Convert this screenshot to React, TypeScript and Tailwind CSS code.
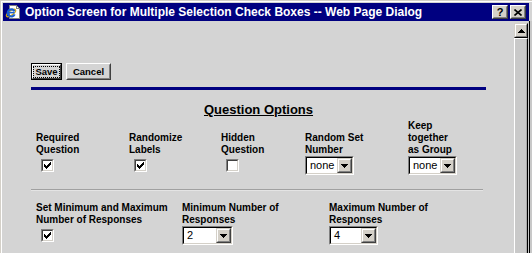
import type { ReactNode } from "react";

const face = "bg-[#d4d4d4]";

function TitleIcon() {
  return (
    <svg width="16" height="16" viewBox="0 0 16 16" shapeRendering="crispEdges">
      <path d="M4.5 1.5h7l3 3v10h-10z" fill="#fff" stroke="#808080" />
      <path d="M11.5 1.5v3h3" fill="none" stroke="#808080" />
      <g shapeRendering="auto">
        <ellipse cx="6" cy="9" rx="5.5" ry="2.2" transform="rotate(-35 6 9)" fill="none" stroke="#e0b000" strokeWidth="1.2" />
        <path d="M9.6 10.4a3.6 3.6 0 1 1 0-3" fill="none" stroke="#1a5fd0" strokeWidth="2.2" />
        <path d="M3.2 8.6h6.4" stroke="#1a5fd0" strokeWidth="1.6" />
      </g>
    </svg>
  );
}

function CaptionButton({ children }: { children: ReactNode }) {
  return (
    <div className="h-[14px] w-[16px] border border-b-[#404040] border-l-white border-r-[#404040] border-t-white bg-[#d4d0c8]">
      <div className="flex h-full w-full items-center justify-center border border-b-[#808080] border-l-[#d4d0c8] border-r-[#808080] border-t-[#d4d0c8]">
        {children}
      </div>
    </div>
  );
}

function Check() {
  return (
    <svg width="7" height="7" viewBox="0 0 7 7" shapeRendering="crispEdges">
      <path
        d="M0 2h1v1h1v1h1v-1h1v-1h1v-1h1v-1h1v3h-1v1h-1v1h-1v1h-1v1h-1v-1h-1v-1h-1v-1h-1z"
        fill="#000"
      />
    </svg>
  );
}

function Checkbox({ checked }: { checked?: boolean }) {
  return (
    <div className="ml-[5px] h-[13px] w-[13px] border border-b-white border-l-[#808080] border-r-white border-t-[#808080]">
      <div className="flex h-full w-full items-center justify-center border border-b-[#d4d0c8] border-l-[#404040] border-r-[#d4d0c8] border-t-[#404040] bg-white">
        {checked && <Check />}
      </div>
    </div>
  );
}

function DownArrow() {
  return (
    <svg width="7" height="4" viewBox="0 0 7 4" shapeRendering="crispEdges">
      <path d="M0 0h7v1h-1v1h-1v1h-1v1h-1v-1h-1v-1h-1v-1h-1z" fill="#000" />
    </svg>
  );
}

function Select({ value, className }: { value: string; className: string }) {
  return (
    <div className={`h-[19px] border border-b-white border-l-[#808080] border-r-white border-t-[#808080] ${className}`}>
      <div className="flex h-full w-full border border-b-[#d4d0c8] border-l-[#000] border-r-[#d4d0c8] border-t-[#000] bg-white">
        <span className="flex-1 pl-[3px] text-[11px] leading-[15px] text-black">{value}</span>
        <div className="h-full w-[15px] border border-b-[#404040] border-l-[#d4d0c8] border-r-[#404040] border-t-[#d4d0c8] bg-[#d4d0c8]">
          <div className="flex h-full w-full items-center justify-center border border-b-[#808080] border-l-white border-r-[#808080] border-t-white">
            <DownArrow />
          </div>
        </div>
      </div>
    </div>
  );
}

function Label({ children }: { children: ReactNode }) {
  return <div className="pl-[5px] text-[10px] font-bold leading-[12px] text-black">{children}</div>;
}

function Cell({ children }: { children: ReactNode }) {
  return <div className="flex h-[19px] items-center pl-[5px]">{children}</div>;
}

export default function App() {
  return (
    <div
      className={`flex h-[253px] w-[532px] flex-col overflow-hidden pl-[3px] pt-[3px] font-['Liberation_Sans',Arial,sans-serif] shadow-[inset_1px_1px_0_#d4d0c8,inset_2px_2px_0_#ffffff] ${face}`}
    >
      {/* caption */}
      <div className="flex h-[18px] w-[526px] items-center bg-[#000080] pl-[2px] pr-[3px]">
        <TitleIcon />
        <span className="ml-[4px] flex-1 text-[12px] font-bold leading-[18px] text-white">
          Option Screen for Multiple Selection Check Boxes -- Web Page Dialog
        </span>
        <CaptionButton>
          <span className="text-[11px] font-bold leading-none text-black">?</span>
        </CaptionButton>
        <div className="ml-[2px]">
          <CaptionButton>
            <svg width="8" height="7" viewBox="0 0 8 7">
              <path d="M0.5 0.5l7 6M7.5 0.5l-7 6" stroke="#000" strokeWidth="1.6" />
            </svg>
          </CaptionButton>
        </div>
      </div>

      <div className="flex flex-1">
        {/* page */}
        <div className="w-[511px] pl-[28px] pt-[42px]">
          <div className="flex items-start gap-[4px]">
            <div className="h-[17px] w-[31px] border border-black">
              <div className="flex h-full w-full items-center justify-center border border-b-[#404040] border-l-white border-r-[#404040] border-t-white">
                <span className="border border-dotted border-black px-[1px] text-[9.5px] font-bold leading-[10px] text-black">
                  Save
                </span>
              </div>
            </div>
            <div className="h-[17px] w-[45px] border border-b-[#404040] border-l-white border-r-[#404040] border-t-white">
              <div className="flex h-full w-full items-center justify-center border border-b-[#808080] border-l-[#d4d4d4] border-r-[#808080] border-t-[#d4d4d4]">
                <span className="text-[9.5px] font-bold leading-[10px] text-black">Cancel</span>
              </div>
            </div>
          </div>

          <div className="mt-[7px] h-[3px] w-[455px] bg-[#000080]" />

          <div className="mt-[12px] w-[455px] text-center text-[13px] font-bold leading-[15px] text-black underline">
            Question Options
          </div>

          <div className="mt-[3px] grid w-[455px] grid-cols-[93px_92px_84px_103px_1fr] items-end">
            <Label>
              Required
              <br />
              Question
            </Label>
            <Label>
              Randomize
              <br />
              Labels
            </Label>
            <Label>
              Hidden
              <br />
              Question
            </Label>
            <Label>
              Random Set
              <br />
              Number
            </Label>
            <Label>
              Keep
              <br />
              together
              <br />
              as Group
            </Label>
            <Cell>
              <Checkbox checked />
            </Cell>
            <Cell>
              <Checkbox checked />
            </Cell>
            <Cell>
              <Checkbox />
            </Cell>
            <Cell>
              <Select value="none" className="w-[49px]" />
            </Cell>
            <Cell>
              <Select value="none" className="w-[49px]" />
            </Cell>
          </div>

          <div className="mt-[14px] w-[452px]">
            <div className="h-px bg-[#a0a0a0]" />
            <div className="h-px bg-[#e4e4e4]" />
          </div>

          <div className="mt-[11px] grid w-[455px] grid-cols-[146px_147px_1fr] items-end">
            <Label>
              Set Minimum and Maximum
              <br />
              Number of Responses
            </Label>
            <Label>
              Minimum Number of
              <br />
              Responses
            </Label>
            <Label>
              Maximum Number of
              <br />
              Responses
            </Label>
            <Cell>
              <Checkbox checked />
            </Cell>
            <Cell>
              <Select value="2" className="w-[51px]" />
            </Cell>
            <Cell>
              <Select value="4" className="w-[49px]" />
            </Cell>
          </div>
        </div>

        {/* scrollbar */}
        <div className="mt-[2px] flex w-[14px] flex-col">
          <div className="h-[15px] w-[14px] border border-b-black border-l-[#d4d0c8] border-r-black border-t-[#d4d0c8] bg-[#d4d0c8]">
            <div className="flex h-full w-full items-center justify-center border border-b-[#808080] border-l-white border-r-[#808080] border-t-white">
              <svg width="7" height="4" viewBox="0 0 7 4" shapeRendering="crispEdges">
                <path d="M3 0h1v1h1v1h1v1h1v1h-7v-1h1v-1h1v-1h1z" fill="#000" />
              </svg>
            </div>
          </div>
          <div className="flex-1 border-l border-r border-t border-l-white border-r-black border-t-white bg-[#c9c9c9]">
            <div className="h-full w-full border-r border-r-[#a8a8a8]" />
          </div>
        </div>

        {/* right frame */}
        <div className="flex w-[4px]">
          <div className="w-px bg-[#c8c8c8]" />
          <div className="w-px bg-black" />
          <div className="w-[2px] bg-[#c8c8c8]" />
        </div>
      </div>
    </div>
  );
}
